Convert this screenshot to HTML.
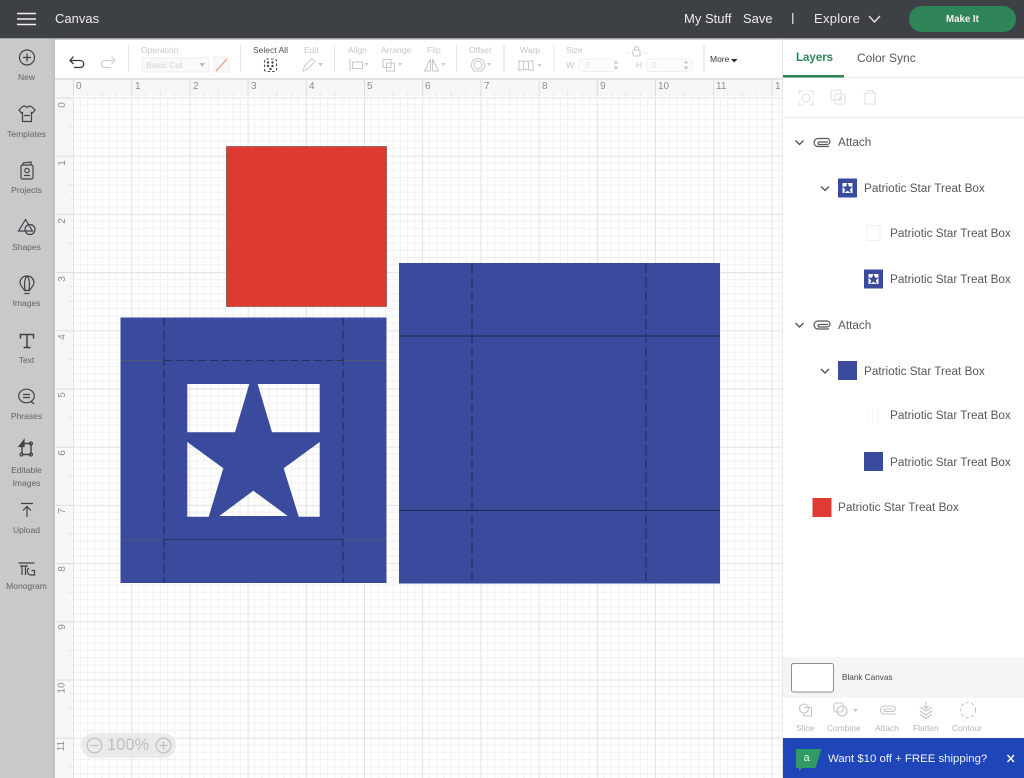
<!DOCTYPE html>
<html><head><meta charset="utf-8"><style>
html,body{margin:0;padding:0;background:#fff}
body{width:1024px;height:778px;overflow:hidden;position:relative;font-family:"Liberation Sans",sans-serif;filter:blur(.3px)}
.t{position:absolute;white-space:nowrap;line-height:1}
.side{font-size:8.5px;color:#5f6366;width:55px;text-align:center;left:0}
.tl{font-size:8.5px;color:#c4c6c7}
.ly{font-size:11.75px;color:#55585b}
.bt{font-size:8.4px;color:#b4b6b8}
svg{position:absolute;left:0;top:0}
</style></head><body>
<svg width="1024" height="778" viewBox="0 0 1024 778" fill="none">
<defs>
<pattern id="g" x="73" y="97.5" width="58.2" height="58.2" patternUnits="userSpaceOnUse">
<path d="M7.275 0V58.2M14.55 0V58.2M21.825 0V58.2M29.1 0V58.2M36.375 0V58.2M43.65 0V58.2M50.925 0V58.2M0 7.275H58.2M0 14.55H58.2M0 21.825H58.2M0 29.1H58.2M0 36.375H58.2M0 43.65H58.2M0 50.925H58.2" stroke="#f1f1f1" stroke-width="1"/>
<path d="M.5 0V58.2M0 .5H58.2" stroke="#e2e2e2" stroke-width="1"/>
</pattern>
<pattern id="rx" x="73" y="80" width="58.2" height="16" patternUnits="userSpaceOnUse">
<path d="M.5 0V16" stroke="#dcdcdc"/><path d="M14.55 13V16M43.65 13V16M29.1 11V16" stroke="#e6e6e6"/>
</pattern>
<pattern id="ry" x="55" y="97.5" width="18" height="58.2" patternUnits="userSpaceOnUse">
<path d="M0 .5H18" stroke="#dcdcdc"/><path d="M15 14.55H18M15 43.65H18M13 29.1H18" stroke="#e6e6e6"/>
</pattern>
</defs>
<!-- canvas -->
<rect x="55" y="78" width="727" height="700" fill="#fff"/>
<rect x="73" y="97" width="709" height="681" fill="url(#g)"/>
<rect x="55" y="80" width="727" height="16" fill="#f7f7f7"/>
<rect x="55" y="80" width="727" height="16" fill="url(#rx)"/>
<rect x="55" y="96" width="18" height="682" fill="#f7f7f7"/>
<rect x="55" y="96" width="18" height="682" fill="url(#ry)"/>
<rect x="55" y="78" width="727" height="2" fill="#e2e2e2"/>
<!-- shapes -->
<rect x="226.5" y="146.5" width="160" height="160" fill="#de3a32" stroke="#7a4a48" stroke-width=".7"/>
<path fill-rule="evenodd" fill="#3a4b9e" d="M120.5 317.5H386.5V583H120.5Z M187.3 384H249.3L235 432.3H187.3Z M257.7 384H319.7V432.3H272Z M187.3 442L223.3 468.3 208.7 516.7H187.3Z M319.7 442L283.7 468.3 298.7 516.7H319.7Z M253.3 490.7L287.7 516H219.3Z"/>
<path d="M120.5 360.5H164M343 360.5H386.5M120.5 539.5H164M343 539.5H386.5" stroke="#4d5478" stroke-width="1"/>
<path d="M164 539.5H343" stroke="#262f66" stroke-width="1"/>
<path d="M164 360.5H343" stroke="#262f66" stroke-width="1" stroke-dasharray="8 3.5"/>
<path d="M164 317.5V583M343 317.5V583" stroke="#1f2757" stroke-width="1" stroke-dasharray="9 4"/>
<rect x="399" y="263" width="321" height="320.5" fill="#3a4b9e"/>
<path d="M399 336H720M399 510.500H720" stroke="#20274f" stroke-width="1"/>
<path d="M472 263V583.500M646 263V583.500" stroke="#1f2757" stroke-width="1" stroke-dasharray="10 4"/>
<!-- header -->
<rect width="1024" height="38" fill="#3d4145"/>
<rect y="38" width="1024" height="1.500" fill="#9fa1a3"/>
<path d="M17 13.500H36M17 19H36M17 24.500H36" stroke="#f2f2f2" stroke-width="1.600"/>
<path d="M792.800 13V24" stroke="#e8e8e8" stroke-width="1.200"/>
<path d="M869 16L874.500 22 880 16" stroke="#e8e8e8" stroke-width="1.300"/>
<rect x="909" y="6" width="107" height="26" rx="13" fill="#2f8558"/>
<!-- left sidebar -->
<rect y="39" width="55" height="739" fill="#c9c9c9"/>
<rect x="52" y="39" width="3" height="739" fill="#c3c3c3"/>
<g stroke="#3f4347" stroke-width="1.200">
<circle cx="27" cy="57.500" r="7.500"/><path d="M27 53.500V61.500M23 57.500H31"/>
<path d="M22.500 106.500L25 106Q27 108.500 29 106L31.500 106.500 35 110 32.500 113 31.500 112.500V121.500H22.500V112.500L21.500 113 19 110Z"/>
<path d="M24 115.500H30"/>
<rect x="21" y="165" width="12" height="14" rx="1.500"/><path d="M23 165V163L31 162V165"/><circle cx="27" cy="170.500" r="2.200"/><path d="M24 175.500H30"/>
<path d="M25.500 219.500L32.500 231H18.500Z"/><circle cx="30" cy="229.500" r="5"/>
<path d="M27 276C22 276 20 280 20 282.500 20 285.500 23 288 24.500 290.500H29.500C31 288 34 285.500 34 282.500 34 280 32 276 27 276ZM27 276C24 279 24 287 25.500 290.500M27 276C30 279 30 287 28.500 290.500M24.500 293.500H29.500"/>
<path d="M20.500 338.500V334.500H33.500V338.500M27 334.500V347.500M23.500 347.500H30.500" stroke-width="1.500"/>
<ellipse cx="26.500" cy="396" rx="7.800" ry="6.800"/><path d="M23 394.500H30M23 397.500H30M31 401.500L34 404"/>
<path d="M22 443.500H31M31 443.500V454M22 447V454M22 454.500H31" stroke-width="1.400"/>
<circle cx="21.500" cy="454.500" r="1.500"/><circle cx="31" cy="454.500" r="1.500"/><circle cx="31" cy="443.500" r="1.500"/>
<path d="M24 440V446.500H19Z" fill="#3f4347"/>
<path d="M21 503.500H33M27 517V507M23 510.500L27 506.500 31 510.500"/>
<path d="M18.500 563H34.500M20 566H28M22 566V575M25.500 566V575M29 568C26 570 27.500 575 31 575H34.500V570.500H31.500"/>
</g>
<!-- toolbar -->
<g stroke="#e3e3e3" stroke-width="1"><path d="M128.500 45V72M240.500 45V72M334.500 45V72M456.500 45V72M504 45V72M554 45V72M704 45V72"/></g>
<path d="M782.500 39V778" stroke="#e6e6e6"/>
<path d="M71 60.500H80C85 60.500 85 67.500 80 67.500H74M73.500 56.500L70 60.500 73.500 64" stroke="#33373a" stroke-width="1.300"/>
<path d="M114 60.500H105C100 60.500 100 67.500 105 67.500H111M111.500 56.500L115 60.500 111.500 64" stroke="#cfd1d2" stroke-width="1.200"/>
<rect x="142" y="58" width="67" height="14" rx="2" fill="#fafafa" stroke="#eeeeee"/>
<path d="M199.500 63H205L202.200 67Z" fill="#bdbdbd"/>
<rect x="214" y="57" width="15" height="15" fill="#fafafa" stroke="#efefef"/>
<path d="M216 71L227 59" stroke="#eeab92" stroke-width="1.600"/>
<rect x="264.500" y="59" width="12" height="12.500" rx="2" stroke="#45494c" stroke-width="1.100" stroke-dasharray="2.500 2"/>
<g fill="#45494c"><circle cx="268" cy="62.500" r="1.200"/><circle cx="272.500" cy="62.500" r="1.200"/><circle cx="268" cy="66" r="1.200"/><circle cx="272.500" cy="66" r="1.200"/><circle cx="270.500" cy="69" r="1.200"/></g>
<path d="M303 71L304.500 66 312 58.500 315 61.500 307.500 69Z" stroke="#c9cbcc"/>
<path d="M318 63H323L320.500 66.500Z" fill="#c9cbcc"/>
<g stroke="#c6c8c9" stroke-width="1">
<path d="M350 59V71"/><rect x="352.500" y="62" width="10" height="6.500"/>
<rect x="383" y="59.500" width="8" height="8"/><rect x="386.500" y="63" width="8" height="8"/>
<path d="M424.500 71H430.500V59ZM432.500 59V71H438.500Z"/>
<circle cx="478" cy="65" r="4"/><path d="M478 58L483.500 60.500 485 66 482 71H474L471 66 472.500 60.500Z"/>
<path d="M519 60.500Q526 62.500 533 60.500V70.500Q526 68.500 519 70.500ZM523.500 61.500V69.500M528.500 61.500V69.500"/>
<rect x="579" y="59" width="36" height="12.500" rx="2" stroke="#efefef" fill="#fcfcfc"/>
<rect x="647" y="59" width="45" height="12.500" rx="2" stroke="#efefef" fill="#fcfcfc"/>
<rect x="633" y="50" width="7" height="6" rx="1"/><path d="M634.500 50V48.500C634.500 46 638.500 46 638.500 48.500V50"/>
<path d="M625 53H630M643 53H648" stroke="#e8e8e8"/>
</g>
<g fill="#c9cbcc">
<path d="M364.500 63H368.500L366.500 66Z"/><path d="M398 63H402L400 66Z"/><path d="M441.500 63H445.500L443.500 66Z"/><path d="M487 63H491L489 66Z"/><path d="M537.500 64H541.500L539.500 67Z"/>
<path d="M616 60.500L618.500 63.500H613.500ZM616 70L618.500 66.500H613.500Z"/><path d="M686 60.500L688.500 63.500H683.500ZM686 70L688.500 66.500H683.500Z"/>
</g>
<path d="M731 59H737.500L734.200 62.500Z" fill="#2a2d30"/>
<!-- right panel -->
<path d="M783 77.500H1024" stroke="#eeeeee" stroke-width="1.500"/>
<rect x="783" y="75" width="61" height="2.500" fill="#2f8558"/>
<path d="M784 117.500H1024" stroke="#ececec"/>
<g stroke="#e0e0e0" stroke-width="1.100">
<path d="M799 95V91H803M809 91H813V95M813 101V105H809M803 105H799V101"/><circle cx="806" cy="98" r="4"/>
<rect x="831" y="90" width="10" height="10" rx="1"/><rect x="835" y="94" width="10" height="10" rx="1"/><path d="M840 96.500V101.500M837.500 99H842.500"/>
<path d="M863 93H877M867 93V90.500H873V93M865 93V104H875V93"/>
</g>
<g stroke="#4a4e51" stroke-width="1.300">
<path d="M795.500 140.500L799.500 144.500 803.500 140.500M821 186.500L825 190.500 829 186.500M795.500 323L799.500 327 803.500 323M821 369L825 373 829 369"/>
</g>
<g stroke="#54585b" stroke-width="1.200">
<path d="M829 146.500H818A4 4 0 0 1 818 138.500H827A3 3 0 0 1 827 144.500H819A1.300 1.300 0 0 1 819 142H828"/>
<path d="M829 329H818A4 4 0 0 1 818 321H827A3 3 0 0 1 827 327H819A1.300 1.300 0 0 1 819 324.500H828"/>
</g>
<rect x="838" y="178.500" width="19" height="19" fill="#3a4b9e"/>
<rect x="864" y="269.500" width="19" height="19" fill="#3a4b9e"/>
<g>
<rect x="842.500" y="183" width="10" height="10" fill="#fff"/>
<path d="M847.500 182.500L849 186.600 853 186.600 849.900 189.300 851 193 847.500 190.800 844 193 845.100 189.300 842 186.600 846 186.600Z" fill="#3a4b9e"/>
</g>
<g transform="translate(26 91)">
<rect x="842.500" y="183" width="10" height="10" fill="#fff"/>
<path d="M847.500 182.500L849 186.600 853 186.600 849.900 189.300 851 193 847.500 190.800 844 193 845.100 189.300 842 186.600 846 186.600Z" fill="#3a4b9e"/>
</g>
<rect x="867" y="225.500" width="13" height="15" stroke="#f0f0f0"/>
<path d="M868 408.500V423M873 408.500V423M878 408.500V423" stroke="#f3f3f3"/>
<rect x="838" y="361" width="19" height="19" fill="#3a4b9e"/>
<rect x="864" y="452" width="19" height="19" fill="#3a4b9e"/>
<rect x="812.500" y="498" width="19" height="19" fill="#e03a32"/>
<!-- bottom panel -->
<rect x="783" y="657" width="241" height="41" fill="#f5f5f5"/>
<rect x="791.500" y="663.500" width="42" height="28.500" rx="2" fill="#fff" stroke="#8c8f91"/>
<g stroke="#c3c5c6" stroke-width="1.100">
<circle cx="804" cy="708.500" r="4.500"/><path d="M804 707.500H811.500V716H804V713"/>
<rect x="834" y="703" width="9" height="9" rx="2"/><circle cx="842" cy="711" r="5"/>
<path d="M895.500 714H884.500A4 4 0 0 1 884.500 706H892.500A2.700 2.700 0 0 1 892.500 711.500H885.500A1.200 1.200 0 0 1 885.500 709H893"/>
<path d="M926 702V708M923.500 706L926 708.500 928.500 706M920 707L926 711 932 707M920 711L926 715 932 711M920 714.500L926 718.500 932 714.500"/>
<circle cx="968" cy="710" r="7.500" stroke-dasharray="3 2.500"/>
</g>
<path d="M853 709H858L855.500 712Z" fill="#c3c5c6"/>
<rect x="783" y="738" width="241" height="40" fill="#1e46b8"/>
<path d="M796 749H821.500L815.500 768H802L799 771V768H796Z" fill="#2f9a63"/>
<path d="M1007.500 755L1014 762M1014 755L1007.500 762" stroke="#fff" stroke-width="1.400"/>
<!-- zoom pill -->
<rect x="81" y="733" width="95" height="25" rx="12.500" fill="#e4e4e4" fill-opacity=".75"/>
<g stroke="#bdbfc0" stroke-width="1.200"><circle cx="94.500" cy="745.500" r="7.300"/><path d="M90.500 745.500H98.500"/><circle cx="163.500" cy="745.500" r="7.300"/><path d="M159.500 745.500H167.500M163.500 741.500V749.500"/></g>
</svg>

<!-- header text -->
<div class="t" style="left:55px;top:12px;font-size:13px;color:#ececec">Canvas</div>
<div class="t" style="left:684px;top:12px;font-size:13px;color:#ececec">My Stuff</div>
<div class="t" style="left:743px;top:12px;font-size:13px;color:#ececec">Save</div>
<div class="t" style="left:814px;top:12px;font-size:13px;color:#ececec;letter-spacing:.3px">Explore</div>
<div class="t" style="left:946px;top:14.500px;font-size:9.700px;font-weight:bold;color:#f2f2f2">Make It</div>

<!-- sidebar -->
<div class="t side" style="top:73px;left:-1px">New</div>
<div class="t side" style="top:130px;left:-1px">Templates</div>
<div class="t side" style="top:186px;left:-1px">Projects</div>
<div class="t side" style="top:243px;left:-1px">Shapes</div>
<div class="t side" style="top:299px;left:-1px">Images</div>
<div class="t side" style="top:356px;left:-1px">Text</div>
<div class="t side" style="top:412px;left:-1px">Phrases</div>
<div class="t side" style="top:466px;left:-1px">Editable</div>
<div class="t side" style="top:478.500px;left:-1px">Images</div>
<div class="t side" style="top:526px;left:-1px">Upload</div>
<div class="t side" style="top:582px;left:-1px">Monogram</div>

<!-- toolbar -->
<div class="t tl" style="left:141px;top:45.500px">Operation</div>
<div class="t tl" style="left:146px;top:61px;color:#cfd1d2">Basic Cut</div>
<div class="t tl" style="left:253px;top:45.500px;color:#505457">Select All</div>
<div class="t tl" style="left:304px;top:45.500px">Edit</div>
<div class="t tl" style="left:348px;top:45.500px">Align</div>
<div class="t tl" style="left:381px;top:45.500px">Arrange</div>
<div class="t tl" style="left:427px;top:45.500px">Flip</div>
<div class="t tl" style="left:469px;top:45.500px">Offset</div>
<div class="t tl" style="left:520px;top:45.500px">Warp</div>
<div class="t tl" style="left:566px;top:45.500px">Size</div>
<div class="t tl" style="left:566px;top:61px">W</div>
<div class="t tl" style="left:636px;top:61px">H</div>
<div class="t tl" style="left:585px;top:61px;color:#e2e2e2">0</div>
<div class="t tl" style="left:652px;top:61px;color:#e2e2e2">0</div>
<div class="t" style="left:710px;top:55px;font-size:8.500px;color:#33373a">More</div>

<!-- rulers -->
<div style="color:#8b8d8f;font-size:10px">
<div class="t" style="left:76px;top:81.500px">0</div><div class="t" style="left:135px;top:81.500px">1</div><div class="t" style="left:193px;top:81.500px">2</div><div class="t" style="left:251px;top:81.500px">3</div><div class="t" style="left:309px;top:81.500px">4</div><div class="t" style="left:367px;top:81.500px">5</div><div class="t" style="left:425px;top:81.500px">6</div><div class="t" style="left:484px;top:81.500px">7</div><div class="t" style="left:542px;top:81.500px">8</div><div class="t" style="left:600px;top:81.500px">9</div><div class="t" style="left:658px;top:81.500px">10</div><div class="t" style="left:716px;top:81.500px">11</div><div class="t" style="left:775px;top:81.500px">1</div>
<div class="t" style="left:59.500px;top:100px;transform:rotate(-90deg)">0</div><div class="t" style="left:59.500px;top:158px;transform:rotate(-90deg)">1</div><div class="t" style="left:59.500px;top:216px;transform:rotate(-90deg)">2</div><div class="t" style="left:59.500px;top:274px;transform:rotate(-90deg)">3</div><div class="t" style="left:59.500px;top:332px;transform:rotate(-90deg)">4</div><div class="t" style="left:59.500px;top:390px;transform:rotate(-90deg)">5</div><div class="t" style="left:59.500px;top:448px;transform:rotate(-90deg)">6</div><div class="t" style="left:59.500px;top:506px;transform:rotate(-90deg)">7</div><div class="t" style="left:59.500px;top:564px;transform:rotate(-90deg)">8</div><div class="t" style="left:59.500px;top:622px;transform:rotate(-90deg)">9</div><div class="t" style="left:56.500px;top:683px;transform:rotate(-90deg)">10</div><div class="t" style="left:56.500px;top:741px;transform:rotate(-90deg)">11</div>
</div>

<!-- right panel -->
<div class="t" style="left:796px;top:53px;font-size:11.500px;font-weight:bold;color:#2f8558">Layers</div>
<div class="t" style="left:857px;top:52px;font-size:12px;color:#55585b">Color Sync</div>
<div class="t ly" style="left:838px;top:137px">Attach</div>
<div class="t ly" style="left:864px;top:183px">Patriotic Star Treat Box</div>
<div class="t ly" style="left:890px;top:227.500px">Patriotic Star Treat Box</div>
<div class="t ly" style="left:890px;top:274px">Patriotic Star Treat Box</div>
<div class="t ly" style="left:838px;top:319.500px">Attach</div>
<div class="t ly" style="left:864px;top:365.500px">Patriotic Star Treat Box</div>
<div class="t ly" style="left:890px;top:410px">Patriotic Star Treat Box</div>
<div class="t ly" style="left:890px;top:456.500px">Patriotic Star Treat Box</div>
<div class="t ly" style="left:838px;top:502px">Patriotic Star Treat Box</div>
<div class="t" style="left:842px;top:674px;font-size:8.200px;color:#45494c">Blank Canvas</div>
<div class="t bt" style="left:796px;top:723.500px">Slice</div>
<div class="t bt" style="left:827px;top:723.500px">Combine</div>
<div class="t bt" style="left:875px;top:723.500px">Attach</div>
<div class="t bt" style="left:913px;top:723.500px">Flatten</div>
<div class="t bt" style="left:952px;top:723.500px">Contour</div>
<div class="t" style="left:803.500px;top:753px;font-size:11px;color:#e9f5ee">a</div>
<div class="t" style="left:828px;top:753.500px;font-size:11.400px;color:#f2f4fb">Want $10 off + FREE shipping?</div>
<div class="t" style="left:107px;top:737px;font-size:16.500px;color:#bdbfc0">100%</div>
</body></html>
